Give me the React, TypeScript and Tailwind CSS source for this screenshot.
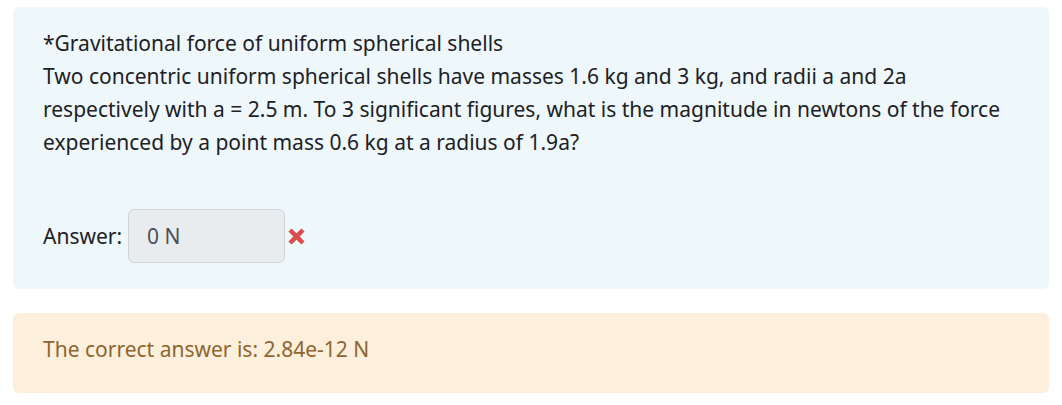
export default function App() {
  return (
    <div className="min-h-[405px] bg-white px-[13px] pt-[7px] font-['Noto_Sans',sans-serif] text-[21px] leading-[33px] text-[#1d2125]">
      <div className="rounded-md bg-[#eef7fa] px-[30px] pt-[20px] pb-[26px]">
        <div>*Gravitational force of uniform spherical shells</div>
        <p>
          Two concentric uniform spherical shells have masses 1.6 kg and 3 kg, and radii a and 2a
          respectively with a = 2.5 m. To 3 significant figures, what is the magnitude in newtons of the
          force experienced by a point mass 0.6 kg at a radius of 1.9a?
        </p>
        <div className="mt-[50px] flex items-center">
          <label className="mr-[6px]">Answer:</label>
          <div className="flex h-[54px] w-[157px] items-center rounded-md border border-[#ced4da] bg-[#e9ecef] px-[18px] text-[#495057]">
            0 N
          </div>
          <svg viewBox="0 0 16 16" className="ml-[3px] h-[17px] w-[17px] text-[#dc4d4d]" fill="currentColor">
            <path d="M3.4 0.4 8 5 12.6 0.4 15.6 3.4 11 8 15.6 12.6 12.6 15.6 8 11 3.4 15.6 0.4 12.6 5 8 0.4 3.4Z" />
          </svg>
        </div>
      </div>
      <div className="mt-[24px] rounded-md bg-[#fcefdc] px-[30px] pt-[20px] pb-[27px] text-[#8e662e]">
        The correct answer is: 2.84e-12 N
      </div>
    </div>
  );
}
